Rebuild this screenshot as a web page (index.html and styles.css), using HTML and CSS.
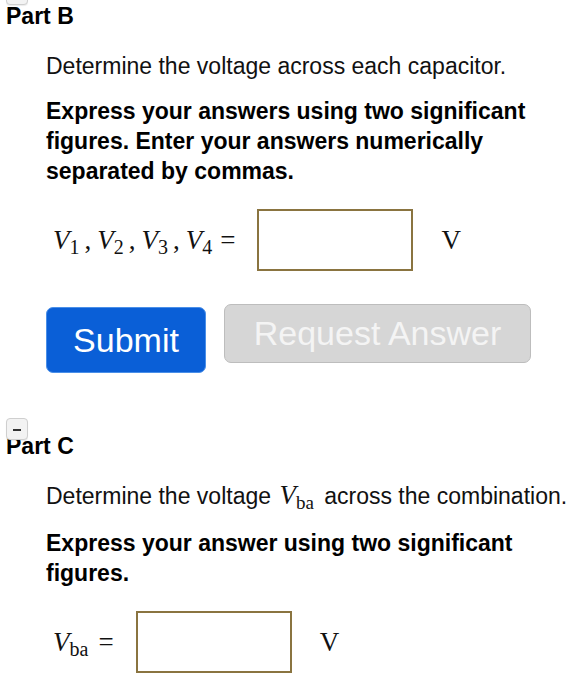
FILE: index.html
```html
<!DOCTYPE html>
<html lang="en">
<head>
<meta charset="utf-8">
<title>Capacitors – Parts B and C</title>
<link rel="stylesheet" href="styles.css">
</head>
<body>
  <section class="part part-b">
    <header class="part-head">
      <span class="toggle" aria-hidden="true"></span>
      <h2 class="part-title">Part B</h2>
    </header>
    <div class="part-body">
      <p class="prompt">Determine the voltage across each capacitor.</p>
      <p class="instr">Express your answers using two significant figures. Enter your answers numerically separated by commas.</p>
      <div class="answer-row">
        <span class="math"><i>V</i><sub>1</sub><span class="sep">,</span><i>V</i><sub>2</sub><span class="sep">,</span><i>V</i><sub>3</sub><span class="sep">,</span><i>V</i><sub>4</sub><span class="eq">=</span></span>
        <span class="answer-box"></span>
        <span class="unit">V</span>
      </div>
      <div class="actions">
        <button class="btn btn-submit" type="button">Submit</button>
        <button class="btn btn-request" type="button" disabled>Request Answer</button>
      </div>
    </div>
  </section>

  <section class="part part-c">
    <header class="part-head">
      <span class="toggle" aria-hidden="true"></span>
      <h2 class="part-title">Part C</h2>
    </header>
    <div class="part-body">
      <p class="prompt">Determine the voltage <span class="math inline"><i>V</i><sub>ba</sub></span> across the combination.</p>
      <p class="instr">Express your answer using two significant figures.</p>
      <div class="answer-row">
        <span class="math"><i>V</i><sub>ba</sub><span class="eq eq-wide">=</span></span>
        <span class="answer-box"></span>
        <span class="unit">V</span>
      </div>
    </div>
  </section>
</body>
</html>
```

FILE: styles.css
```css
html, body {
  margin: 0;
  padding: 0;
  background: #ffffff;
}

body {
  width: 571px;
  height: 679px;
  overflow: hidden;
  font-family: "Liberation Sans", Arial, Helvetica, sans-serif;
  color: #111111;
}

.part {
  position: relative;
}

.part-head {
  position: relative;
  padding-left: 6px;
}

.part-title {
  margin: 0;
  font-size: 23px;
  line-height: 28px;
  font-weight: bold;
  color: #000;
}

/* collapse toggle, sits half over the section title */
.toggle {
  position: absolute;
  left: 6px;
  top: -14px;
  width: 22px;
  height: 22px;
  border: 1px solid #cfcfcf;
  border-radius: 4px;
  background: #f3f3f3;
  box-sizing: border-box;
  box-shadow: 0 1px 1px rgba(0, 0, 0, 0.08);
}

.toggle::after {
  content: "";
  position: absolute;
  left: 6px;
  top: 10px;
  width: 8px;
  height: 2px;
  background: #333;
}

.part-b .part-head {
  padding-top: 2px;
}

.part-b .toggle {
  top: -17px;
}

.part-body {
  padding-left: 46px;
}

.prompt {
  margin: 0;
  font-size: 23px;
  line-height: 28px;
  color: #111;
}

.instr {
  margin: 0;
  font-size: 23px;
  line-height: 30px;
  font-weight: bold;
  color: #000;
}

.part-b .prompt {
  margin-top: 22px;
}

.part-b .instr {
  margin-top: 16px;
}

/* formula row: label, entry box, unit */
.answer-row {
  display: flex;
  align-items: center;
}

.part-b .answer-row {
  margin-top: 23px;
}

.math {
  font-family: "Liberation Serif", "Times New Roman", serif;
  font-size: 27px;
  color: #111;
  white-space: nowrap;
}

.math i {
  font-style: italic;
}

.math sub {
  font-size: 20px;
  vertical-align: -5px;
  line-height: 0;
  font-style: normal;
}

.math .sep {
  margin: 0 6px 0 5px;
}

.math .eq {
  margin-left: 8px;
}

.math .eq-wide {
  margin-left: 10px;
}

.answer-row > .math {
  margin-left: 7px;
}

.answer-box {
  height: 62px;
  width: 156px;
  margin-left: 22px;
  box-sizing: border-box;
  border: 2px solid #8a7440;
  background: #fff;
}

.unit {
  font-family: "Liberation Serif", "Times New Roman", serif;
  font-size: 27px;
  color: #111;
  margin-left: 28px;
}

.actions {
  display: flex;
  align-items: flex-start;
  gap: 18px;
  margin-top: 33px;
}

.btn {
  font-family: "Liberation Sans", Arial, Helvetica, sans-serif;
  font-size: 34px;
  border-radius: 7px;
  box-sizing: border-box;
  padding: 0;
  cursor: pointer;
}

.btn-submit {
  margin-top: 3px;
  width: 160px;
  height: 66px;
  background: #0a5fd7;
  border: 1px solid #4a8fe8;
  color: #ffffff;
}

.btn-request {
  width: 307px;
  height: 59px;
  background: #d6d6d6;
  border: 1px solid #bdbdbd;
  color: #f4f4f4;
  cursor: default;
}

/* Part C */
.part-c {
  margin-top: 59px;
}

.part-c .prompt {
  margin-top: 21px;
}

.part-c .prompt .math.inline {
  margin: 0 4px 0 2px;
}

.part-c .prompt .math.inline sub {
  font-size: 19px;
}

.part-c .instr {
  margin-top: 18px;
}

.part-c .answer-row {
  margin-top: 23px;
}
```
